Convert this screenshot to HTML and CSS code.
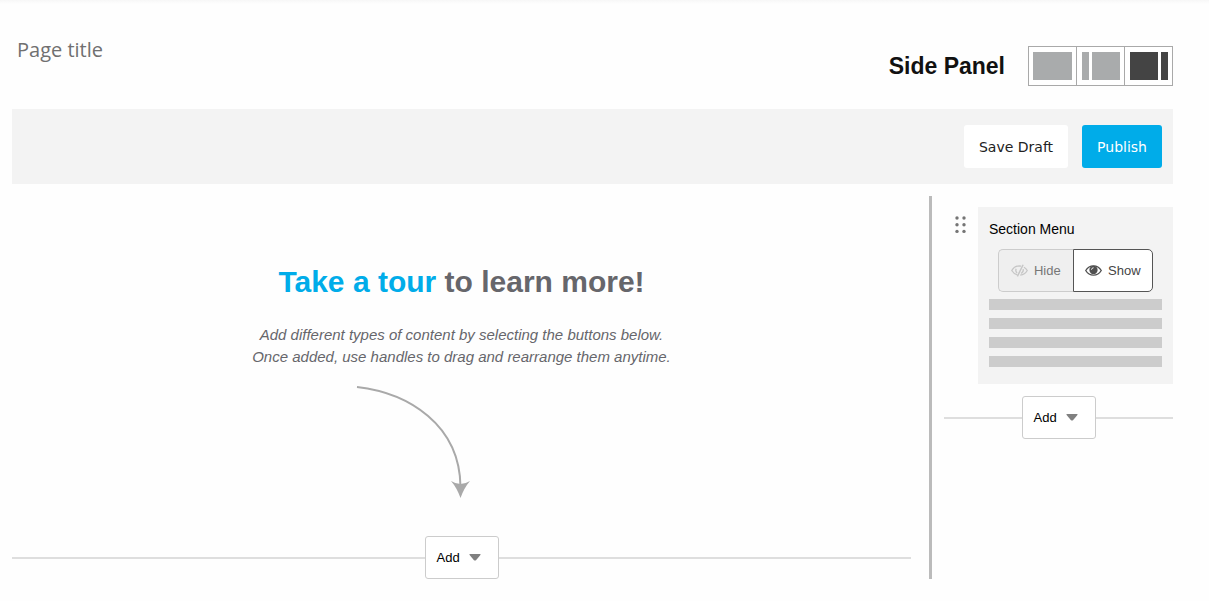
FILE: index.html
```html
<!DOCTYPE html>
<html lang="en">
<head>
<meta charset="utf-8">
<meta name="viewport" content="width=device-width, initial-scale=1">
<title>Page editor</title>
<link rel="stylesheet" href="styles.css">
</head>
<body>
<div class="page">
  <header class="header">
    <input class="page-title" type="text" placeholder="Page title" aria-label="Page title">
    <div class="panel-picker">
      <span class="panel-label" id="panel-label">Side Panel</span>
      <div class="layouts" role="group" aria-labelledby="panel-label">
        <button class="layout" type="button" aria-label="No side panel"><span class="block wide"></span></button>
        <button class="layout" type="button" aria-label="Left side panel"><span class="block narrow"></span><span class="block wide"></span></button>
        <button class="layout selected" type="button" aria-label="Right side panel" aria-pressed="true"><span class="block wide"></span><span class="block narrow"></span></button>
      </div>
    </div>
  </header>

  <div class="toolbar">
    <button class="action" type="button">Save Draft</button>
    <button class="action primary" type="button">Publish</button>
  </div>

  <div class="workspace">
    <main class="content">
      <h1 class="tour"><a class="tour-link" href="#tour">Take a tour</a> to learn more!</h1>
      <p class="hint">Add different types of content by selecting the buttons below.<br>Once added, use handles to drag and rearrange them anytime.</p>
      <svg class="arrow" viewBox="0 0 216 114" aria-hidden="true">
        <path d="M3 3C55 9 106 41 106.500 103" fill="none" stroke="#a9a9a9" stroke-width="2"/>
        <path d="M97 97q9.500 6 19 0-6 7-9.500 17Q103 104 97 97z" fill="#a9a9a9"/>
      </svg>
      <div class="add-row">
        <button class="add" type="button">Add <svg class="caret" viewBox="0 0 12 7" aria-hidden="true"><path d="M1 0h10q1 0 .4.900L7 6.200q-1 .8-2 0L.6.900Q0 0 1 0z" fill="#808080"/></svg></button>
      </div>
    </main>

    <aside class="side">
      <div class="section">
        <svg class="handle" viewBox="0 0 12 18" aria-hidden="true"><g fill="#757575"><circle cx="2" cy="2" r="1.700"/><circle cx="9" cy="2" r="1.700"/><circle cx="2" cy="8.700" r="1.700"/><circle cx="9" cy="8.700" r="1.700"/><circle cx="2" cy="15.400" r="1.700"/><circle cx="9" cy="15.400" r="1.700"/></g></svg>
        <div class="card">
          <h2 class="card-title">Section Menu</h2>
          <div class="toggle">
            <button class="option hide" type="button">
              <svg class="eye" viewBox="0 0 16 12" aria-hidden="true"><g fill="none" stroke="#c6c6c6" stroke-width="1.200"><path d="M6 10.200C3.800 9.600 2 8.200.7 6 2.500 3 5 1.600 8 1.600l1.600.2M12.200 2.900C13.500 3.700 14.500 4.700 15.300 6c-1.500 2.600-3.800 4-6.600 4.300"/><path d="M4.800 4.400q-.9 2.600 1 3.800"/><path d="M11.400.6 6 11.600" stroke-width="1.400"/><path d="M11.500 4.800q.5 2.800-2 4"/></g></svg>
              <span>Hide</span>
            </button>
            <button class="option show" type="button" aria-pressed="true">
              <svg class="eye" viewBox="0 0 16 12" aria-hidden="true"><path d="M.7 6C2.500 3 5 1.600 8 1.600S13.500 3 15.300 6C13.500 9 11 10.400 8 10.400S2.500 9 .7 6z" fill="none" stroke="#505050" stroke-width="1.300"/><circle cx="8" cy="5.500" r="3.900" fill="#505050"/><path d="M6.100 5.200Q6.300 3.600 8 3.400" fill="none" stroke="#fff" stroke-width=".9"/></svg>
              <span>Show</span>
            </button>
          </div>
          <div class="bars"><span class="bar"></span><span class="bar"></span><span class="bar"></span><span class="bar"></span></div>
        </div>
      </div>
      <div class="add-row">
        <button class="add" type="button">Add <svg class="caret" viewBox="0 0 12 7" aria-hidden="true"><path d="M1 0h10q1 0 .4.900L7 6.200q-1 .8-2 0L.6.900Q0 0 1 0z" fill="#808080"/></svg></button>
      </div>
    </aside>
  </div>
</div>
</body>
</html>
```
FILE: styles.css
```css
* { box-sizing: border-box; }
body {
  margin: 0;
  background: linear-gradient(#f7f7f7, #fefefe 4px) #fefefe;
  font-family: "Liberation Sans", Arial, sans-serif;
  color: #111;
}
button { font: inherit; color: inherit; cursor: pointer; margin: 0; }
.page { padding: 36px 36px 22px 12px; }

.header {
  display: flex;
  justify-content: space-between;
  align-items: flex-start;
  margin-bottom: 23px;
}
.page-title {
  flex: 1;
  min-width: 0;
  height: 26px;
  padding: 0 5px;
  border: 0;
  background: none;
  font: 20px "Open Sans", sans-serif;
}
.page-title::placeholder { color: #707070; opacity: 1; }
.panel-picker { display: flex; align-items: center; gap: 23px; margin-top: 10px; }
.panel-label { font-size: 23px; font-weight: bold; }
.layouts { display: flex; border: 1px solid #a9a9a9; }
.layout {
  display: flex;
  gap: 3px;
  width: 48px;
  height: 38px;
  padding: 5px 4px;
  border: 0;
  border-right: 1px solid #a9a9a9;
  background: #fff;
}
.layout:last-child { width: 47px; border-right: 0; }
.layout + .layout { padding-left: 5px; }
.block { background: #a9abac; }
.wide { flex: 1; }
.narrow { width: 7px; }
.selected .block { background: #444; }

.toolbar {
  display: flex;
  justify-content: flex-end;
  gap: 14px;
  padding: 16px 11px;
  margin-bottom: 12px;
  background: #f3f3f3;
}
.action {
  height: 43px;
  padding: 0 15px;
  border: 0;
  border-radius: 3px;
  background: #fff;
  color: #222;
  font: 14px "DejaVu Sans", Verdana, sans-serif;
}
.primary { background: #00ace9; color: #fff; }

.workspace { display: flex; min-height: 383px; }
.content {
  flex: 1;
  display: flex;
  flex-direction: column;
  align-items: center;
  margin-right: 18px;
}
.tour {
  margin: 68px 0 24px;
  font-size: 30px;
  line-height: 36px;
  color: #66666b;
}
.tour-link { color: #00ace9; text-decoration: none; }
.hint {
  margin: 0 0 16px;
  font-size: 15px;
  font-style: italic;
  line-height: 22px;
  text-align: center;
  color: #66666b;
}
.arrow { width: 216px; height: 114px; }
.content .add-row { margin-top: auto; }

.add-row { display: flex; align-items: center; align-self: stretch; }
.add-row::before, .add-row::after { content: ""; flex: 1; height: 2px; background: #dedede; }
.add {
  display: flex;
  align-items: center;
  gap: 9px;
  width: 74px;
  height: 43px;
  padding: 0 11px;
  border: 1px solid #ccc;
  border-radius: 3px;
  background: #fff;
  color: #000;
  font-size: 13px;
}
.caret { width: 12px; height: 7px; }

.side { width: 244px; padding: 11px 0 0 12px; border-left: 3px solid #bbb; }
.section { display: flex; align-items: flex-start; margin-bottom: 12px; }
.handle { width: 12px; height: 18px; margin: 9px 11px 0; }
.card { flex: 1; padding: 12px 11px 17px; background: #f3f3f3; }
.card-title { margin: 0 0 10px; font-size: 14px; font-weight: normal; line-height: 20px; color: #000; }
.toggle { display: flex; margin: 0 9px 7px; }
.option {
  display: flex;
  align-items: center;
  justify-content: center;
  gap: 6px;
  height: 43px;
  padding: 0;
  border: 1px solid #ccc;
  font-size: 13px;
}
.eye { width: 17px; height: 13px; }
.hide { flex: 75; border-right: 0; border-radius: 5px 0 0 5px; background: #efefef; color: #777; }
.show { flex: 80; border-color: #555; border-radius: 0 5px 5px 0; background: #fff; color: #444; }
.bars { display: grid; gap: 8px; }
.bar { height: 11px; background: #ccc; }
```
